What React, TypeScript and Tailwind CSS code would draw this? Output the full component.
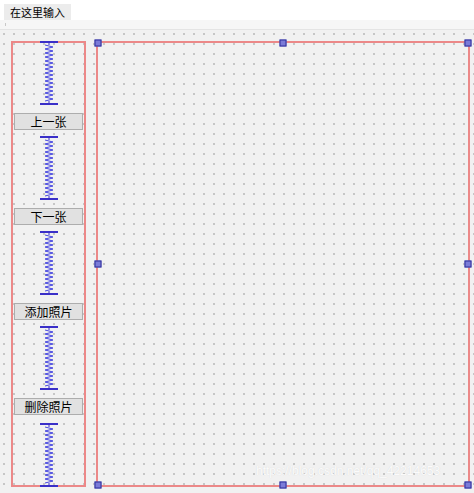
import React from 'react'

const red = 'border-[#ec8888]'

function Spring() {
  // vertical spacer: bars on top and bottom, zigzag between
  const h = 64
  const pts: string[] = []
  for (let y = 4, i = 0; y <= h - 4; y += 2, i++) {
    pts.push(`${i % 2 ? 13 : 5},${y}`)
  }
  return (
    <svg width="18" height={h} viewBox={`0 0 18 ${h}`} className="block shrink-0">
      <line x1="0" y1="1" x2="18" y2="1" stroke="#3a2fc8" strokeWidth="2" />
      <line x1="9" y1="1" x2="9" y2="4" stroke="#3a2fc8" strokeWidth="1" />
      <polyline points={pts.join(' ')} fill="none" stroke="#4848e0" strokeWidth="1" />
      <line x1="9" y1={h - 4} x2="9" y2={h - 1} stroke="#3a2fc8" strokeWidth="1" />
      <line x1="0" y1={h - 1} x2="18" y2={h - 1} stroke="#3a2fc8" strokeWidth="2" />
    </svg>
  )
}

function Btn({ label }: { label: string }) {
  return (
    <div className="mx-[1px] h-[17px] shrink-0 bg-[#e1e1e1] border border-[#adadad] flex items-center justify-center text-[12px] leading-none text-black">
      {label}
    </div>
  )
}

function Handle({ className }: { className: string }) {
  return (
    <div
      className={`absolute w-[7px] h-[7px] bg-[#7b7bd8] border border-[#2e2e9a] -translate-x-1/2 -translate-y-1/2 ${className}`}
    />
  )
}

export default function App() {
  const labels = ['上一张', '下一张', '添加照片', '删除照片']
  return (
    <div
      className="w-[474px] h-[493px] bg-white flex flex-col overflow-hidden"
      style={{ fontFamily: '"Noto Sans CJK SC", "Liberation Sans", sans-serif' }}
    >
      {/* menu bar */}
      <div className="h-[20px] bg-white flex items-end pl-[4px]">
        <span className="h-[16px] px-[6px] bg-[#ececec] text-[11px] leading-[16px] text-black">在这里输入</span>
      </div>
      <div className="h-[10px] bg-[#f6f6f6] border-b border-[#e4e4e4] relative">
        <span className="absolute left-[5px] top-[3px] w-[1px] h-[3px] bg-[#c8c8c8]" />
      </div>

      {/* form canvas */}
      <div className="relative flex-1 bg-[#f1f1f1] bg-[radial-gradient(circle,#c6c6c6_0.8px,transparent_1px)] bg-[size:10px_10px] bg-[position:-1px_-1px] pt-[11px] pl-[11px] flex gap-[10px]">
        <div className={`w-[75px] h-[446px] border-2 ${red} flex flex-col justify-between items-stretch`}>
          {labels.map((l) => (
            <React.Fragment key={l}>
              <div className="flex justify-center -mt-[2px] first:mt-[-2px]">
                <Spring />
              </div>
              <Btn label={l} />
            </React.Fragment>
          ))}
          <div className="flex justify-center -mb-[2px]">
            <Spring />
          </div>
        </div>

        <div className={`relative w-[374px] h-[446px] border-2 ${red}`}>
          <Handle className="left-0 top-0" />
          <Handle className="left-1/2 top-0" />
          <Handle className="left-full top-0" />
          <Handle className="left-0 top-1/2" />
          <Handle className="left-full top-1/2" />
          <Handle className="left-0 top-full" />
          <Handle className="left-1/2 top-full" />
          <Handle className="left-full top-full" />
        </div>

        <span
          className="absolute left-[256px] top-[432px] text-[12px] text-white/90 whitespace-nowrap pointer-events-none [text-shadow:0_0_1px_#d0d0d0]"
          style={{ fontFamily: '"Liberation Sans", sans-serif' }}
        >
          https://blog.csdn.net/qq_42214653
        </span>
      </div>
    </div>
  )
}
